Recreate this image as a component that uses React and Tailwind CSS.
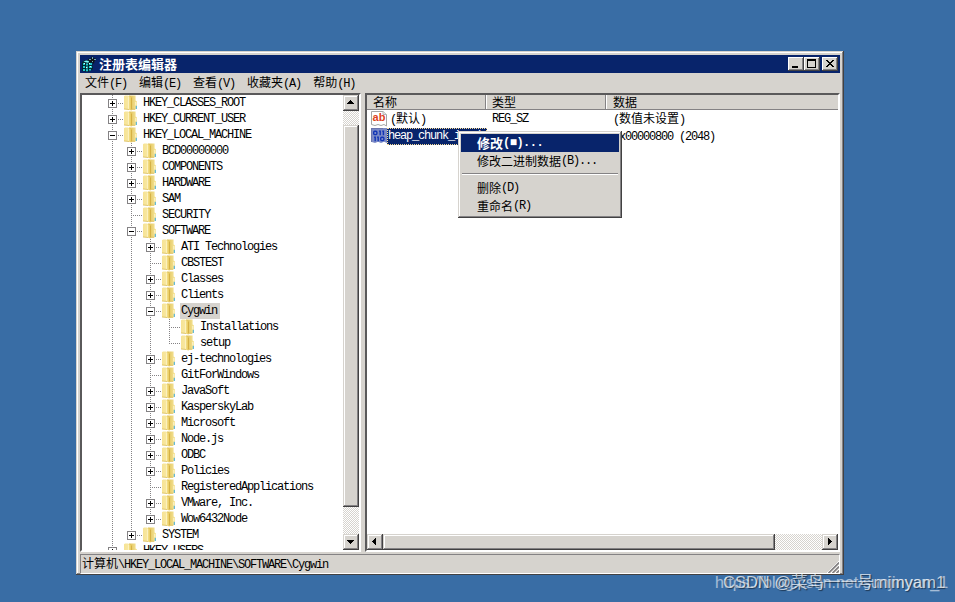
import React from 'react';

// Latin runs sit on a fixed 6px pitch, CJK glyphs on 12px
const Txt = ({ children }) =>
    children.split(/([\u4e00-\u9fff]+)/).filter(Boolean).map((part, i) =>
        /[\u4e00-\u9fff]/.test(part) ? (
            <span key={i} className="tracking-normal font-['Noto_Sans_CJK_SC',sans-serif]">{part}</span>
        ) : (
            <span key={i} className="tracking-[-1.2px] text-[12px] font-['Liberation_Mono',monospace]">{part}</span>
        )
    );

const RAISED = 'bg-[#d6d3ce] shadow-[inset_-1px_-1px_#424142,inset_1px_1px_#d6d3ce,inset_-2px_-2px_#848284,inset_2px_2px_#ffffff]';
const SUNKEN = 'border-2 border-t-[#5a595a] border-l-[#5a595a] border-r-white border-b-white';
const TRACK = 'bg-[repeating-conic-gradient(#d6d3ce_0_25%,#ffffff_0_50%)] bg-[length:2px_2px]';

const TREE = [
    [0, '+', 'HKEY_CLASSES_ROOT'],
    [0, '+', 'HKEY_CURRENT_USER'],
    [0, '-', 'HKEY_LOCAL_MACHINE'],
    [1, '+', 'BCD00000000'],
    [1, '+', 'COMPONENTS'],
    [1, '+', 'HARDWARE'],
    [1, '+', 'SAM'],
    [1, '', 'SECURITY'],
    [1, '-', 'SOFTWARE'],
    [2, '+', 'ATI Technologies'],
    [2, '', 'CBSTEST'],
    [2, '+', 'Classes'],
    [2, '+', 'Clients'],
    [2, '-', 'Cygwin'],
    [3, '', 'Installations'],
    [3, '', 'setup'],
    [2, '+', 'ej-technologies'],
    [2, '', 'GitForWindows'],
    [2, '+', 'JavaSoft'],
    [2, '+', 'KasperskyLab'],
    [2, '+', 'Microsoft'],
    [2, '+', 'Node.js'],
    [2, '+', 'ODBC'],
    [2, '+', 'Policies'],
    [2, '', 'RegisteredApplications'],
    [2, '+', 'VMware, Inc.'],
    [2, '+', 'Wow6432Node'],
    [1, '+', 'SYSTEM'],
    [0, '+', 'HKEY_USERS'],
];

// true when another node of this level follows before the branch closes
const continues = (index, level) => {
    for (let i = index + 1; i < TREE.length; i++) {
        if (TREE[i][0] === level) return true;
        if (TREE[i][0] < level) return false;
    }
    return false;
};

const FolderIcon = () => (
    <svg width="14" height="16" viewBox="0 0 14 16" className="shrink-0">
        <defs>
            <linearGradient id="folder" x1="0" x2="1">
                <stop offset="0" stopColor="#f7e394" />
                <stop offset="0.55" stopColor="#f7e7a0" />
                <stop offset="1" stopColor="#e7c752" />
            </linearGradient>
            <linearGradient id="folderBack" x1="0" x2="1">
                <stop offset="0" stopColor="#debe52" />
                <stop offset="1" stopColor="#f7e79c" />
            </linearGradient>
        </defs>
        <path d="M5 0.5 H11.6 V5.6 L13 6.2 V13.6 L11.4 14.4 H5z" fill="url(#folderBack)" />
        <path d="M0 1.2 L1 0.5 H4 L7.5 2.5 V15.8 L5.2 14.6 L0 14z" fill="url(#folder)" />
        <path d="M4.5 1.6 V14.2" stroke="#fff7cf" strokeWidth=".7" />
        <path d="M7.5 2.6 V14.6" stroke="#cea63a" strokeWidth=".7" />
        <path d="M0 14 L5 14.5 M8 14.3 H11" stroke="#d6b64a" strokeWidth=".7" />
        <path d="M12.3 10.8 V14" stroke="#42aee7" />
        <path d="M11.8 7 V10.5" stroke="#fffbe4" strokeWidth=".8" />
    </svg>
);

const Guides = ({ index, level, sign }) => (
    <svg width={(level + 1) * 19 - 3} height="16" className="shrink-0" shapeRendering="crispEdges">
        {Array.from({ length: level + 1 }, (_, l) => {
            const x = l * 19 + 4.5;
            const more = continues(index, l);
            if (l < level && !more) return null;
            return (
                <path key={l} d={`M${x} 0 V${more ? 16 : 9}`} stroke="#848284" strokeDasharray="1 1" />
            );
        })}
        <path d={`M${level * 19 + 4} 8.5 h13`} stroke="#848284" strokeDasharray="1 1" />
        {sign && (
            <>
                <rect x={level * 19 + 0.5} y="4.5" width="8" height="8" fill="#fff" stroke="#848284" />
                <path d={`M${level * 19 + 2} 8.5 h5`} stroke="#000" />
                {sign === '+' && <path d={`M${level * 19 + 4.5} 6 v5`} stroke="#000" />}
            </>
        )}
    </svg>
);

const TreeRow = ({ index, level, sign, label }) => (
    <div className="flex h-4 shrink-0 items-center pl-[26px]">
        <Guides index={index} level={level} sign={sign} />
        <FolderIcon />
        <span className={`ml-1 flex h-4 items-center whitespace-pre pl-px pr-[3px] ${label === 'Cygwin' ? 'bg-[#d6d3ce]' : ''}`}>
            <Txt>{label}</Txt>
        </span>
    </div>
);

const ARROWS = {
    up: 'M4 9 h7 v-1 h-1 v-1 h-1 v-1 h-1 v-1 h-1 v1 h-1 v1 h-1 v1 h-1z',
    down: 'M4 6 h7 v1 h-1 v1 h-1 v1 h-1 v1 h-1 v-1 h-1 v-1 h-1 v-1 h-1z',
    left: 'M9 4 v7 h-1 v-1 h-1 v-1 h-1 v-1 h-1 v-1 h1 v-1 h1 v-1 h1 v-1z',
    right: 'M6 4 v7 h1 v-1 h1 v-1 h1 v-1 h1 v-1 h-1 v-1 h-1 v-1 h-1 v-1z',
};

const ScrollButton = ({ dir }) => (
    <div className={`size-4 shrink-0 ${RAISED}`}>
        <svg width="16" height="16" shapeRendering="crispEdges">
            <path d={ARROWS[dir]} />
        </svg>
    </div>
);

const CaptionButton = ({ children }) => (
    <button className="h-[14px] w-4 bg-[#d6d3ce] shadow-[inset_-1px_-1px_#424142,inset_1px_1px_#ffffff,inset_-2px_-2px_#848284]">
        <svg width="16" height="14" shapeRendering="crispEdges" fill="none" stroke="#000">
            {children}
        </svg>
    </button>
);

const RegeditIcon = () => (
    <svg width="16" height="16" viewBox="0 0 16 16" className="shrink-0">
        <path d="M1 6 L4 4 L11 5 L12 13 L7 16 L1 15z" fill="#002830" />
        <path d="M2 7h2v2H2z M5 7.5h2v2H5z M8 7h3v2H8z M2 10h2v2H2z M5 10.5h2v2H5z M8 10h3v2H8z M2 13h2v2H2z M5 13.3h2v2H5z M8 13h2v1.5H8z" fill="#21c7ce" />
        <path d="M2.5 5.7 L5 4.5 L9 5.3 L7 6.7z" fill="#7bffff" />
        <path d="M3 7h1v1H3z M8 7h1v1H8z M5 11h1v1H5z M9 10h1v1H9z" fill="#d6ffff" />
        <path d="M7 3 L10 2.5 L11 0 L12.5 2 L15.5 3 L13.5 5 L13 8 L11 6 L8 6z" fill="#101418" />
        <path d="M8 3h2v1H8z M11 1h1v2h-1z M13 3h2v1h-2z M11 5h1v1h-1z" fill="#73aeb5" />
    </svg>
);

const StringIcon = () => (
    <svg width="16" height="16" viewBox="0 0 16 16" className="shrink-0">
        <path d="M.5 .5 H12 L15.5 3.5 V15 L13 13.5 L10 14.5 L7 13.5 L4 14.5 L.5 13.5z" fill="#fff" stroke="#a5a6a5" />
        <path d="M12 .5 V3.5 H15.5" fill="#e7e7e7" stroke="#b5b6b5" />
        <text x="1.6" y="10.3" fontSize="11" fontWeight="bold" fontFamily="Liberation Sans, sans-serif" fill="#de4121">ab</text>
    </svg>
);

const BinaryIcon = () => (
    <svg width="16" height="16" viewBox="0 0 16 16" className="shrink-0">
        <path d="M0 0 H16 V15 L13 13.8 L10 15 L7 13.8 L4 15 L0 13.8z" fill="#7b8ac6" />
        <path d="M.5 0 V14 M0 .5 H12" stroke="#6b75ad" />
        <g fill="none" stroke="#1034b5" strokeWidth="1.4">
            <rect x="2.7" y="3.2" width="3.2" height="3.4" rx="1" />
            <path d="M9.2 2.5v4.8 M12.4 2.5v4.8 M4.2 8.5v4.8 M7.2 8.5v4.8" />
            <rect x="9.7" y="9.2" width="3.2" height="3.4" rx="1" />
            <path d="M8 3.2h1 M11.2 3.2h1 M3 9.2h1 M6 9.2h1" strokeWidth="1" />
        </g>
    </svg>
);

const MENUS = ['文件(F)', '编辑(E)', '查看(V)', '收藏夹(A)', '帮助(H)'];

const ContextMenu = () => (
    <div className={`absolute left-[458px] top-[131px] flex h-[87px] w-[164px] flex-col p-[3px] ${RAISED}`}>
        <div className="flex h-[18px] shrink-0 items-center bg-[#08246b] pl-4 text-[13px] font-bold text-white">
            <span className="font-['Noto_Sans_CJK_SC',sans-serif]">修改</span>
            <span className="whitespace-pre font-['Liberation_Mono',monospace] text-[12px] tracking-[-0.5px]">(■)...</span>
        </div>
        <div className="flex h-[18px] shrink-0 items-center pl-4"><Txt>修改二进制数据(B)...</Txt></div>
        <div className="mx-px mt-[3px] mb-[4px] h-[2px] shrink-0 border-t border-t-[#848284] border-b border-b-white" />
        <div className="flex h-[18px] shrink-0 items-center pl-4"><Txt>删除(D)</Txt></div>
        <div className="flex h-[18px] shrink-0 items-center pl-4"><Txt>重命名(R)</Txt></div>
    </div>
);

export default function App() {
    return (
        <div className="relative h-[602px] w-[955px] overflow-hidden bg-[#396da5] pl-[76px] pt-[51px] text-[12px] leading-[16px] text-black">
            <div className={`flex h-[524px] w-[768px] flex-col p-1 ${RAISED}`}>
                {/* Title bar */}
                <div className="flex h-[18px] shrink-0 items-center bg-[#08246b] pl-px pr-[2px]">
                    <RegeditIcon />
                    <span className="ml-[2px] flex-1 font-['Noto_Sans_CJK_SC',sans-serif] text-[13px] font-bold text-white">注册表编辑器</span>
                    <CaptionButton><path d="M4 10h6" strokeWidth="2" /></CaptionButton>
                    <CaptionButton><path d="M3.5 2v8.5h8V2" /><path d="M3 3h9" strokeWidth="2" /></CaptionButton>
                    <div className="ml-[2px] flex">
                        <CaptionButton><path d="M4 3h2v1h1v1h2v-1h1v-1h2v1h-1v1h-1v1h-1v1h1v1h1v1h1v1h-2v-1h-1v-1h-2v1h-1v1h-2v-1h1v-1h1v-1h1v-1h-1v-1h-1v-1h-1z" fill="#000" stroke="none" /></CaptionButton>
                    </div>
                </div>

                {/* Menu bar */}
                <div className="flex h-5 shrink-0 items-center pl-[5px]">
                    {MENUS.map((m) => (
                        <span key={m} className="mr-3 whitespace-pre"><Txt>{m}</Txt></span>
                    ))}
                </div>

                {/* Panes */}
                <div className="flex h-[459px] shrink-0 gap-1">
                    <div className={`flex w-[281px] bg-white ${SUNKEN}`}>
                        <div className="flex min-w-0 flex-1 flex-col overflow-hidden">
                            {TREE.map(([level, sign, label], i) => (
                                <TreeRow key={label} index={i} level={level} sign={sign} label={label} />
                            ))}
                        </div>
                        <div className={`flex w-4 flex-col ${TRACK}`}>
                            <ScrollButton dir="up" />
                            <div className={`mt-[14px] h-[382px] ${RAISED}`} />
                            <div className="flex-1" />
                            <ScrollButton dir="down" />
                        </div>
                    </div>

                    <div className={`flex w-[475px] flex-col bg-white ${SUNKEN}`}>
                        <div className="flex h-[15px] shrink-0 border-b border-b-[#848284] bg-[#d6d3ce]">
                            <div className="flex w-[119px] items-center border-r border-r-[#848284] pl-[6px]"><Txt>名称</Txt></div>
                            <div className="flex w-[120px] items-center border-l border-r border-l-white border-r-[#848284] pl-[5px]"><Txt>类型</Txt></div>
                            <div className="flex flex-1 items-center border-l border-l-white pl-[6px]"><Txt>数据</Txt></div>
                        </div>
                        <div className="flex h-[17px] shrink-0 items-center pl-1">
                            <StringIcon />
                            <span className="w-[105px] pl-[3px]"><Txt>(默认)</Txt></span>
                            <span className="w-[121px]"><Txt>REG_SZ</Txt></span>
                            <span><Txt>(数值未设置)</Txt></span>
                        </div>
                        <div className="flex h-[18px] shrink-0 items-center pl-1">
                            <BinaryIcon />
                            <span className="flex h-[17px] w-[100px] items-center overflow-hidden whitespace-pre border border-dotted border-[#f7db94] bg-[#08246b] text-white">
                                <Txt>heap_chunk_in_mb</Txt>
                            </span>
                            <span className="ml-[5px] w-[121px]"><Txt>REG_DWORD</Txt></span>
                            <span className="whitespace-pre"><Txt>0x00000800 (2048)</Txt></span>
                        </div>
                        <div className="flex-1" />
                        <div className={`flex h-4 shrink-0 ${TRACK}`}>
                            <ScrollButton dir="left" />
                            <div className={`w-[392px] ${RAISED}`} />
                            <div className="flex-1" />
                            <ScrollButton dir="right" />
                        </div>
                    </div>
                </div>

                {/* Status bar */}
                <div className="mt-[2px] flex flex-1 items-center justify-between border-t border-l border-r border-b border-t-[#848284] border-l-[#848284] border-r-white border-b-white pl-px">
                    <span className="whitespace-pre"><Txt>计算机\HKEY_LOCAL_MACHINE\SOFTWARE\Cygwin</Txt></span>
                    <svg width="12" height="12" className="self-end" fill="none">
                        <path d="M0 12L12 0 M4 12L12 4 M8 12L12 8" stroke="#fff" />
                        <path d="M1.5 12L12 1.5 M5.5 12L12 5.5 M9.5 12L12 9.5" stroke="#848284" strokeWidth="1.6" />
                    </svg>
                </div>
            </div>

            <ContextMenu />

            {/* Watermarks */}
            <div className="absolute left-[715px] top-[574px] whitespace-nowrap font-['Liberation_Sans',sans-serif] text-[16px] leading-[18px] text-white/55">
                https://blog.csdn.net/sunjinyan_1
            </div>
            <div className="absolute left-[723px] top-[572px] whitespace-nowrap font-['Liberation_Sans','Noto_Sans_CJK_SC',sans-serif] text-[16.5px] leading-[20px] text-white/70 [text-shadow:1px_1px_1px_#00000080]">
                CSDN @菜鸟一一号mimyam1
            </div>
        </div>
    );
}
